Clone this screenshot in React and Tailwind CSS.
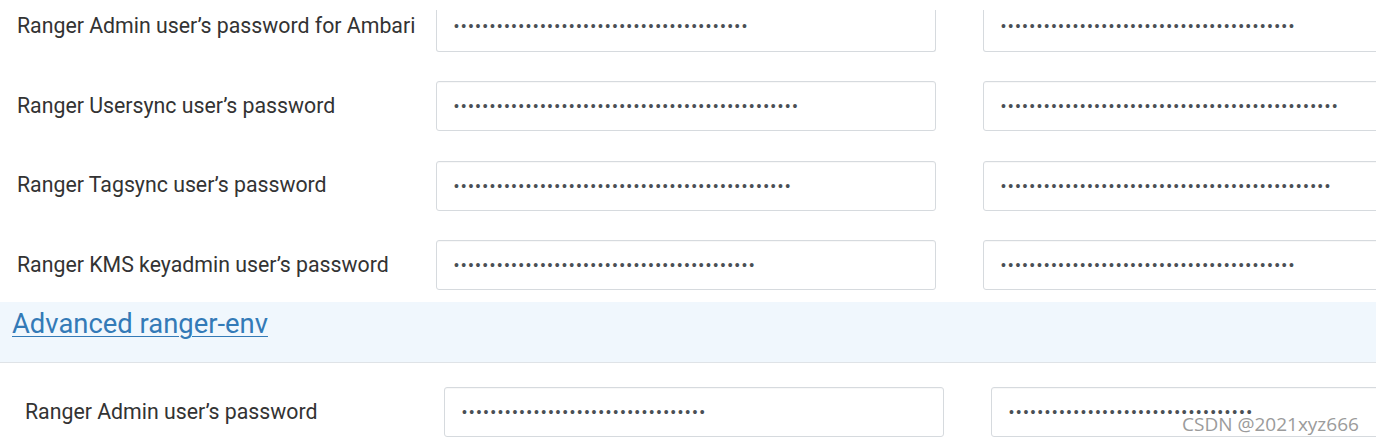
import React from "react";

const font = { fontFamily: "Roboto, 'Liberation Sans', sans-serif" };

function Dots({ n }) {
  return (
    <span className="text-[14px] leading-none tracking-[2.3px] text-[#4a4f55] whitespace-nowrap [font-family:'Liberation_Sans',Arial,sans-serif]">
      {"•".repeat(n)}
    </span>
  );
}

function Box({ n, first }) {
  if (first) {
    return (
      <div className="w-[500px] shrink-0 h-[50px] flex flex-col">
        <div className="mt-[8px] h-[42px] border border-t-0 border-[#d6dade] rounded-b-[3px] bg-white flex items-center pl-[17px] pb-[8px]">
          <Dots n={n} />
        </div>
      </div>
    );
  }
  return (
    <div className="w-[500px] shrink-0 h-[50px] border border-[#d6dade] rounded-[3px] bg-white flex items-center pl-[17px] shadow-[inset_0_1px_1px_rgba(0,0,0,0.03)]">
      <Dots n={n} />
    </div>
  );
}

function Row({ label, a, b, first }) {
  return (
    <div className="flex items-center h-[50px]">
      <div className="w-[419px] shrink-0 text-[21.3px] text-[#333] whitespace-nowrap -mt-[1px]">{label}</div>
      <div className="flex gap-[47px]">
        <Box n={a} first={first} />
        <Box n={b} first={first} />
      </div>
    </div>
  );
}

export default function App() {
  return (
    <div className="relative w-[1376px] h-[446px] overflow-hidden bg-white" style={font}>
      <div className="pt-[1.5px] pl-[17px] flex flex-col gap-[29.5px]">
        <Row label="Ranger Admin user’s password for Ambari" a={41} b={41} first />
        <Row label="Ranger Usersync user’s password" a={48} b={47} />
        <Row label="Ranger Tagsync user’s password" a={47} b={46} />
        <Row label="Ranger KMS keyadmin user’s password" a={42} b={41} />
      </div>
      <div className="mt-[12px] h-[61px] bg-[#f0f7fd] border-b border-[#dfe3e7] flex items-center pl-[12px] pb-[15px]">
        <a className="text-[27.4px] text-[#337ab7] underline underline-offset-[3px] decoration-1 cursor-pointer leading-none">
          Advanced ranger-env
        </a>
      </div>
      <div className="pt-[24px] pl-[25px]">
        <Row label="Ranger Admin user’s password" a={34} b={34} />
      </div>
      <div className="absolute left-[1182px] top-[410px] text-[19px] text-[#9b9b9b] whitespace-nowrap [font-family:'Open_Sans',sans-serif]">
        CSDN @2021xyz666
      </div>
    </div>
  );
}
